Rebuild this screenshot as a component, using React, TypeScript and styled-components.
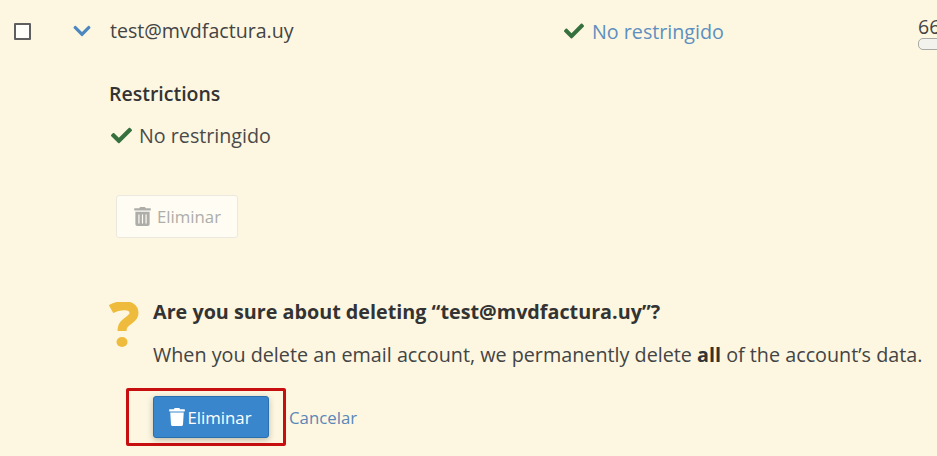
import styled, { createGlobalStyle } from 'styled-components';
import { FaCheck, FaChevronDown, FaTrash, FaTrashAlt } from 'react-icons/fa';

const GlobalStyle = createGlobalStyle`
  html, body {
    margin: 0;
    width: 937px;
    height: 456px;
    overflow: hidden;
    background: #fdf7e1;
    font-family: 'Open Sans', 'Liberation Sans', sans-serif;
    color: #3a3a3a;
  }
`;

export default function App() {
  return (
    <>
      <GlobalStyle />
      <Page>
        <AccountRow>
          <Checkbox />
          <Chevron>
            <FaChevronDown />
          </Chevron>
          <Email>test@mvdfactura.uy</Email>
          <RestrictionLink>
            <CheckIcon />
            No restringido
          </RestrictionLink>
          <Quota>
            <QuotaText>66</QuotaText>
            <QuotaBar />
          </Quota>
        </AccountRow>
        <Details>
          <SectionTitle>Restrictions</SectionTitle>
          <StatusLine>
            <StatusCheck />
            No restringido
          </StatusLine>
          <DisabledButton disabled>
            <FaTrashAlt />
            Eliminar
          </DisabledButton>
        </Details>
        <Confirm>
          <QuestionMark viewBox="0 0 30 46" aria-hidden="true">
            <path d="M2 7 C9 3 25 1 25 11 C25 19 13 18 13 29" fill="none" stroke="currentColor" strokeWidth="9" />
            <ellipse cx="13" cy="40" rx="5.5" ry="5" fill="currentColor" />
          </QuestionMark>
          <ConfirmText>
            <ConfirmTitle>Are you sure about deleting “test@mvdfactura.uy”?</ConfirmTitle>
            <ConfirmBody>
              When you delete an email account, we permanently delete <strong>all</strong> of the
              account’s data.
            </ConfirmBody>
          </ConfirmText>
        </Confirm>
        <Actions>
          <Highlight>
            <PrimaryButton>
              <FaTrash />
              Eliminar
            </PrimaryButton>
          </Highlight>
          <CancelLink href="#">Cancelar</CancelLink>
        </Actions>
      </Page>
    </>
  );
}

const Page = styled.div`
  width: 937px;
  height: 456px;
  overflow: hidden;
  display: flex;
  flex-direction: column;
`;

const AccountRow = styled.div`
  display: flex;
  align-items: center;
  height: 30px;
  margin-top: 16px;
  padding-left: 14px;
`;

const Checkbox = styled.span`
  width: 13px;
  height: 13px;
  flex: none;
  border: 2px solid #5f5f5f;
  border-radius: 1px;
  background: #fefefa;
`;

const Chevron = styled.span`
  display: flex;
  width: 20px;
  margin-left: 41px;
  color: #4d87c0;
  font-size: 20px;
  flex: none;
`;

const Email = styled.span`
  width: 454px;
  margin: -2px 0 0 18px;
  flex: none;
  font-size: 19.6px;
  color: #444;
`;

const CheckIcon = styled(FaCheck)`
  color: #37703f;
  font-size: 20px;
  flex: none;
`;

const RestrictionLink = styled.span`
  display: flex;
  align-items: center;
  gap: 8px;
  width: 354px;
  flex: none;
  font-size: 19.7px;
  color: #5d8fc0;
`;

const Quota = styled.div`
  flex: none;
  width: 40px;
  margin-top: 4px;
`;

const QuotaText = styled.div`
  font-size: 19.5px;
  line-height: 22px;
  color: #444;
`;

const QuotaBar = styled.div`
  width: 40px;
  height: 10px;
  border: 1px solid #a9a9a5;
  border-radius: 5px;
  background: #f3f2ec;
`;

const Details = styled.div`
  display: flex;
  flex-direction: column;
  align-items: flex-start;
  padding-left: 109px;
  margin-top: 34px;
`;

const SectionTitle = styled.h3`
  margin: 0;
  font-size: 19.5px;
  line-height: 27px;
  font-weight: 600;
  color: #333;
`;

const StatusLine = styled.div`
  display: flex;
  align-items: center;
  gap: 7px;
  margin-top: 15px;
  font-size: 19.7px;
  line-height: 27px;
  color: #4a4a4a;
`;

const StatusCheck = styled(CheckIcon)`
  margin-left: 2px;
  font-size: 21px;
`;

const DisabledButton = styled.button`
  display: flex;
  align-items: center;
  justify-content: center;
  gap: 5px;
  width: 122px;
  height: 43px;
  margin: 46px 0 0 7px;
  padding: 0;
  border: 1px solid #ebe9df;
  border-radius: 3px;
  background: #fefcf3;
  font-family: inherit;
  font-size: 16.8px;
  color: #adadaa;
  svg {
    font-size: 19px;
  }
`;

const Confirm = styled.div`
  display: flex;
  margin-top: 60px;
  padding-left: 107px;
`;

const QuestionMark = styled.svg`
  width: 30px;
  height: 46px;
  flex: none;
  margin: 4px 14px 0 2px;
  color: #eebb3c;
`;

const ConfirmText = styled.div`
  display: flex;
  flex-direction: column;
`;

const ConfirmTitle = styled.h2`
  margin: 0;
  font-size: 19.75px;
  line-height: 28px;
  font-weight: 700;
  color: #333;
`;

const ConfirmBody = styled.p`
  margin: 15px 0 0;
  font-size: 19.75px;
  line-height: 28px;
  white-space: nowrap;
  color: #444;
  strong {
    color: #333;
  }
`;

const Actions = styled.div`
  display: flex;
  align-items: center;
  margin-top: 19px;
  padding-left: 126px;
`;

const Highlight = styled.div`
  display: flex;
  box-sizing: border-box;
  width: 160px;
  height: 58px;
  padding: 5px 0 0 24px;
  border: 3px solid #c80f0f;
  border-radius: 2px;
`;

const PrimaryButton = styled.button`
  display: flex;
  align-items: center;
  justify-content: center;
  gap: 1px;
  width: 116px;
  height: 42px;
  padding: 0 2px 0 0;
  border: 1px solid #2a6fae;
  border-radius: 3px;
  background: #3a86cc;
  box-shadow: 0 2px 6px rgba(0, 0, 0, 0.25);
  font-family: inherit;
  font-size: 16.8px;
  color: #fff;
  svg {
    font-size: 18px;
  }
`;

const CancelLink = styled.a`
  margin-left: 3px;
  font-size: 16.8px;
  color: #5a86b8;
  text-decoration: none;
`;
